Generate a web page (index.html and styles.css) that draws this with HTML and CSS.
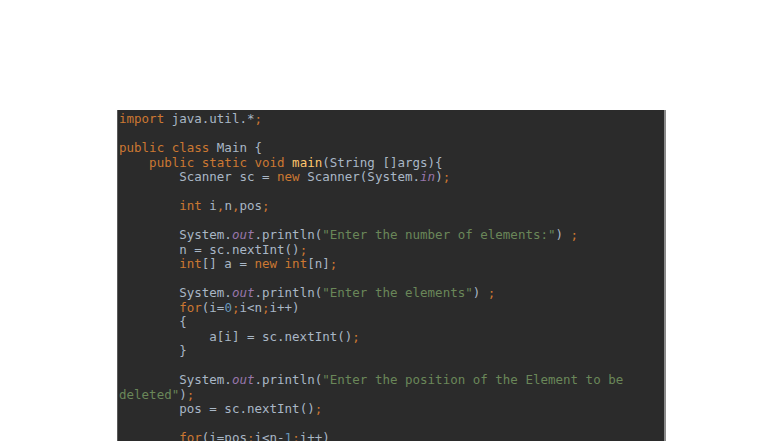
FILE: index.html
```html
<!DOCTYPE html>
<html>
<head>
<meta charset="utf-8">
<link rel="stylesheet" href="styles.css">
</head>
<body>
<div class="page">
<pre class="code"><span class="kw">import</span> java.util.*<span class="kw">;</span>

<span class="kw">public class</span> Main {
    <span class="kw">public static void</span> <span class="fn">main</span>(String []args){
        Scanner sc = <span class="kw">new</span> Scanner(System.<span class="st">in</span>)<span class="kw">;</span>

        <span class="kw">int</span> i<span class="kw">,</span>n<span class="kw">,</span>pos<span class="kw">;</span>

        System.<span class="st">out</span>.println(<span class="str">"Enter the number of elements:"</span>) <span class="kw">;</span>
        n = sc.nextInt()<span class="kw">;</span>
        <span class="kw">int</span>[] a = <span class="kw">new int</span>[n]<span class="kw">;</span>

        System.<span class="st">out</span>.println(<span class="str">"Enter the elements"</span>) <span class="kw">;</span>
        <span class="kw">for</span>(i=<span class="num">0</span><span class="kw">;</span>i&lt;n<span class="kw">;</span>i++)
        {
            a[i] = sc.nextInt()<span class="kw">;</span>
        }

        System.<span class="st">out</span>.println(<span class="str">"Enter the position of the Element to be deleted"</span>)<span class="kw">;</span>
        pos = sc.nextInt()<span class="kw">;</span>

        <span class="kw">for</span>(i=pos<span class="kw">;</span>i&lt;n-<span class="num">1</span><span class="kw">;</span>i++)
        {
            a[i] = a[i+<span class="num">1</span>]<span class="kw">;</span>
        }
}</pre>
</div>
</body>
</html>
```

FILE: styles.css
```css
html, body {
  margin: 0;
  padding: 0;
  background: #ffffff;
  overflow: hidden;
}
.page {
  padding: 110px 0 0 117px;
}
.code {
  margin: 0;
  width: 545px;
  box-sizing: content-box;
  padding: 2px 0 20px 1px;
  background: #2b2b2b;
  border-left: 1px solid #5a5a5a;
  border-right: 2px solid #8a8a8a;
  color: #a9b7c6;
  font-family: "DejaVu Sans Mono", "Liberation Mono", monospace;
  font-size: 12.5px;
  line-height: 14.5px;
  white-space: pre-wrap;
  word-wrap: break-word;
}
.kw { color: #cc7832; }
.str { color: #6a8759; }
.num { color: #6897bb; }
.st { color: #9876aa; font-style: italic; }
.fn { color: #ffc66d; }
```
